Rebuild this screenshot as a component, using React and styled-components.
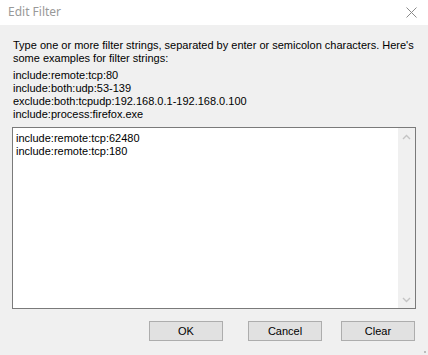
import styled, { createGlobalStyle } from "styled-components"

const GlobalStyle = createGlobalStyle`
    html, body {
        margin: 0;
        padding: 0;
        background: #f0f0f0;
    }
`;

const Chevron = ({ down }) => (
    <svg width="9" height="6" viewBox="0 0 9 6">
        <path
            d={down ? "M1 1 L4.5 4.5 L8 1" : "M1 5 L4.5 1.5 L8 5"}
            fill="none"
            stroke="#c4c4c4"
            strokeWidth="1.4"
        />
    </svg>
);

const App = () => {
    return (
        <Window>
            <GlobalStyle />
            <TitleBar>
                <Title>Edit Filter</Title>
                <CloseButton>
                    <svg width="11" height="11" viewBox="0 0 11 11">
                        <path d="M0.5 0.5 L10.5 10.5 M10.5 0.5 L0.5 10.5" stroke="#8a8a8a" strokeWidth="1" />
                    </svg>
                </CloseButton>
            </TitleBar>
            <Body>
                <Paragraph>
                    Type one or more filter strings, separated by enter or semicolon characters. Here's
                    <br />
                    some examples for filter strings:
                </Paragraph>
                <Examples>
                    <Line>include:remote:tcp:80</Line>
                    <Line>include:both:udp:53-139</Line>
                    <Line>exclude:both:tcpudp:192.168.0.1-192.168.0.100</Line>
                    <Line>include:process:firefox.exe</Line>
                </Examples>
                <TextBox>
                    <TextContent>
                        <Line>include:remote:tcp:62480</Line>
                        <Line>include:remote:tcp:180</Line>
                    </TextContent>
                    <ScrollBar>
                        <Arrow><Chevron /></Arrow>
                        <Arrow><Chevron down /></Arrow>
                    </ScrollBar>
                </TextBox>
                <ButtonRow>
                    <Button>OK</Button>
                    <Button gap={25}>Cancel</Button>
                    <Button gap={19}>Clear</Button>
                </ButtonRow>
            </Body>
            <Grip />
        </Window>
    )
};

const Window = styled.div`
    position: relative;
    width: 428px;
    height: 355px;
    background: #f0f0f0;
    display: flex;
    flex-direction: column;
    overflow: hidden;
    font-family: "Liberation Sans", Arial, sans-serif;
    font-size: 11px;
    color: #000;
`;

const TitleBar = styled.div`
    height: 25px;
    background: #fff;
    display: flex;
    align-items: center;
    justify-content: space-between;
    padding: 0 10px 0 8px;
    flex-shrink: 0;
`;

const Title = styled.div`
    font-family: "Noto Sans", "Open Sans", sans-serif;
    font-size: 12px;
    color: #999;
    margin-top: -2px;
`;

const CloseButton = styled.div`
    display: flex;
    align-items: center;
    justify-content: center;
    width: 14px;
    height: 14px;
    margin-top: -1px;
`;

const Body = styled.div`
    display: flex;
    flex-direction: column;
    padding: 14px 13px 0 13px;
`;

const Paragraph = styled.div`
    line-height: 13px;
`;

const Examples = styled.div`
    margin-top: 4px;
    display: flex;
    flex-direction: column;
`;

const Line = styled.div`
    line-height: 13px;
    white-space: nowrap;
`;

const TextBox = styled.div`
    margin: 6px 0 0 -1px;
    width: 404px;
    height: 182px;
    border: 1px solid #7a7a7a;
    background: #fff;
    display: flex;
    box-sizing: border-box;
`;

const TextContent = styled.div`
    flex: 1;
    padding: 4px 3px;
`;

const ScrollBar = styled.div`
    width: 17px;
    background: #f0f0f0;
    display: flex;
    flex-direction: column;
    justify-content: space-between;
`;

const Arrow = styled.div`
    height: 17px;
    display: flex;
    align-items: center;
    justify-content: center;
`;

const ButtonRow = styled.div`
    display: flex;
    justify-content: flex-end;
    margin-top: 12px;
`;

const Button = styled.div`
    width: 74px;
    height: 20px;
    box-sizing: border-box;
    border: 1px solid #adadad;
    background: #e1e1e1;
    display: flex;
    align-items: center;
    justify-content: center;
    margin-left: ${(p) => p.gap || 0}px;
`;

const Grip = styled.div`
    position: absolute;
    right: 2px;
    bottom: 2px;
    width: 2px;
    height: 2px;
    background: #bcbcbc;
`;

export default App;
